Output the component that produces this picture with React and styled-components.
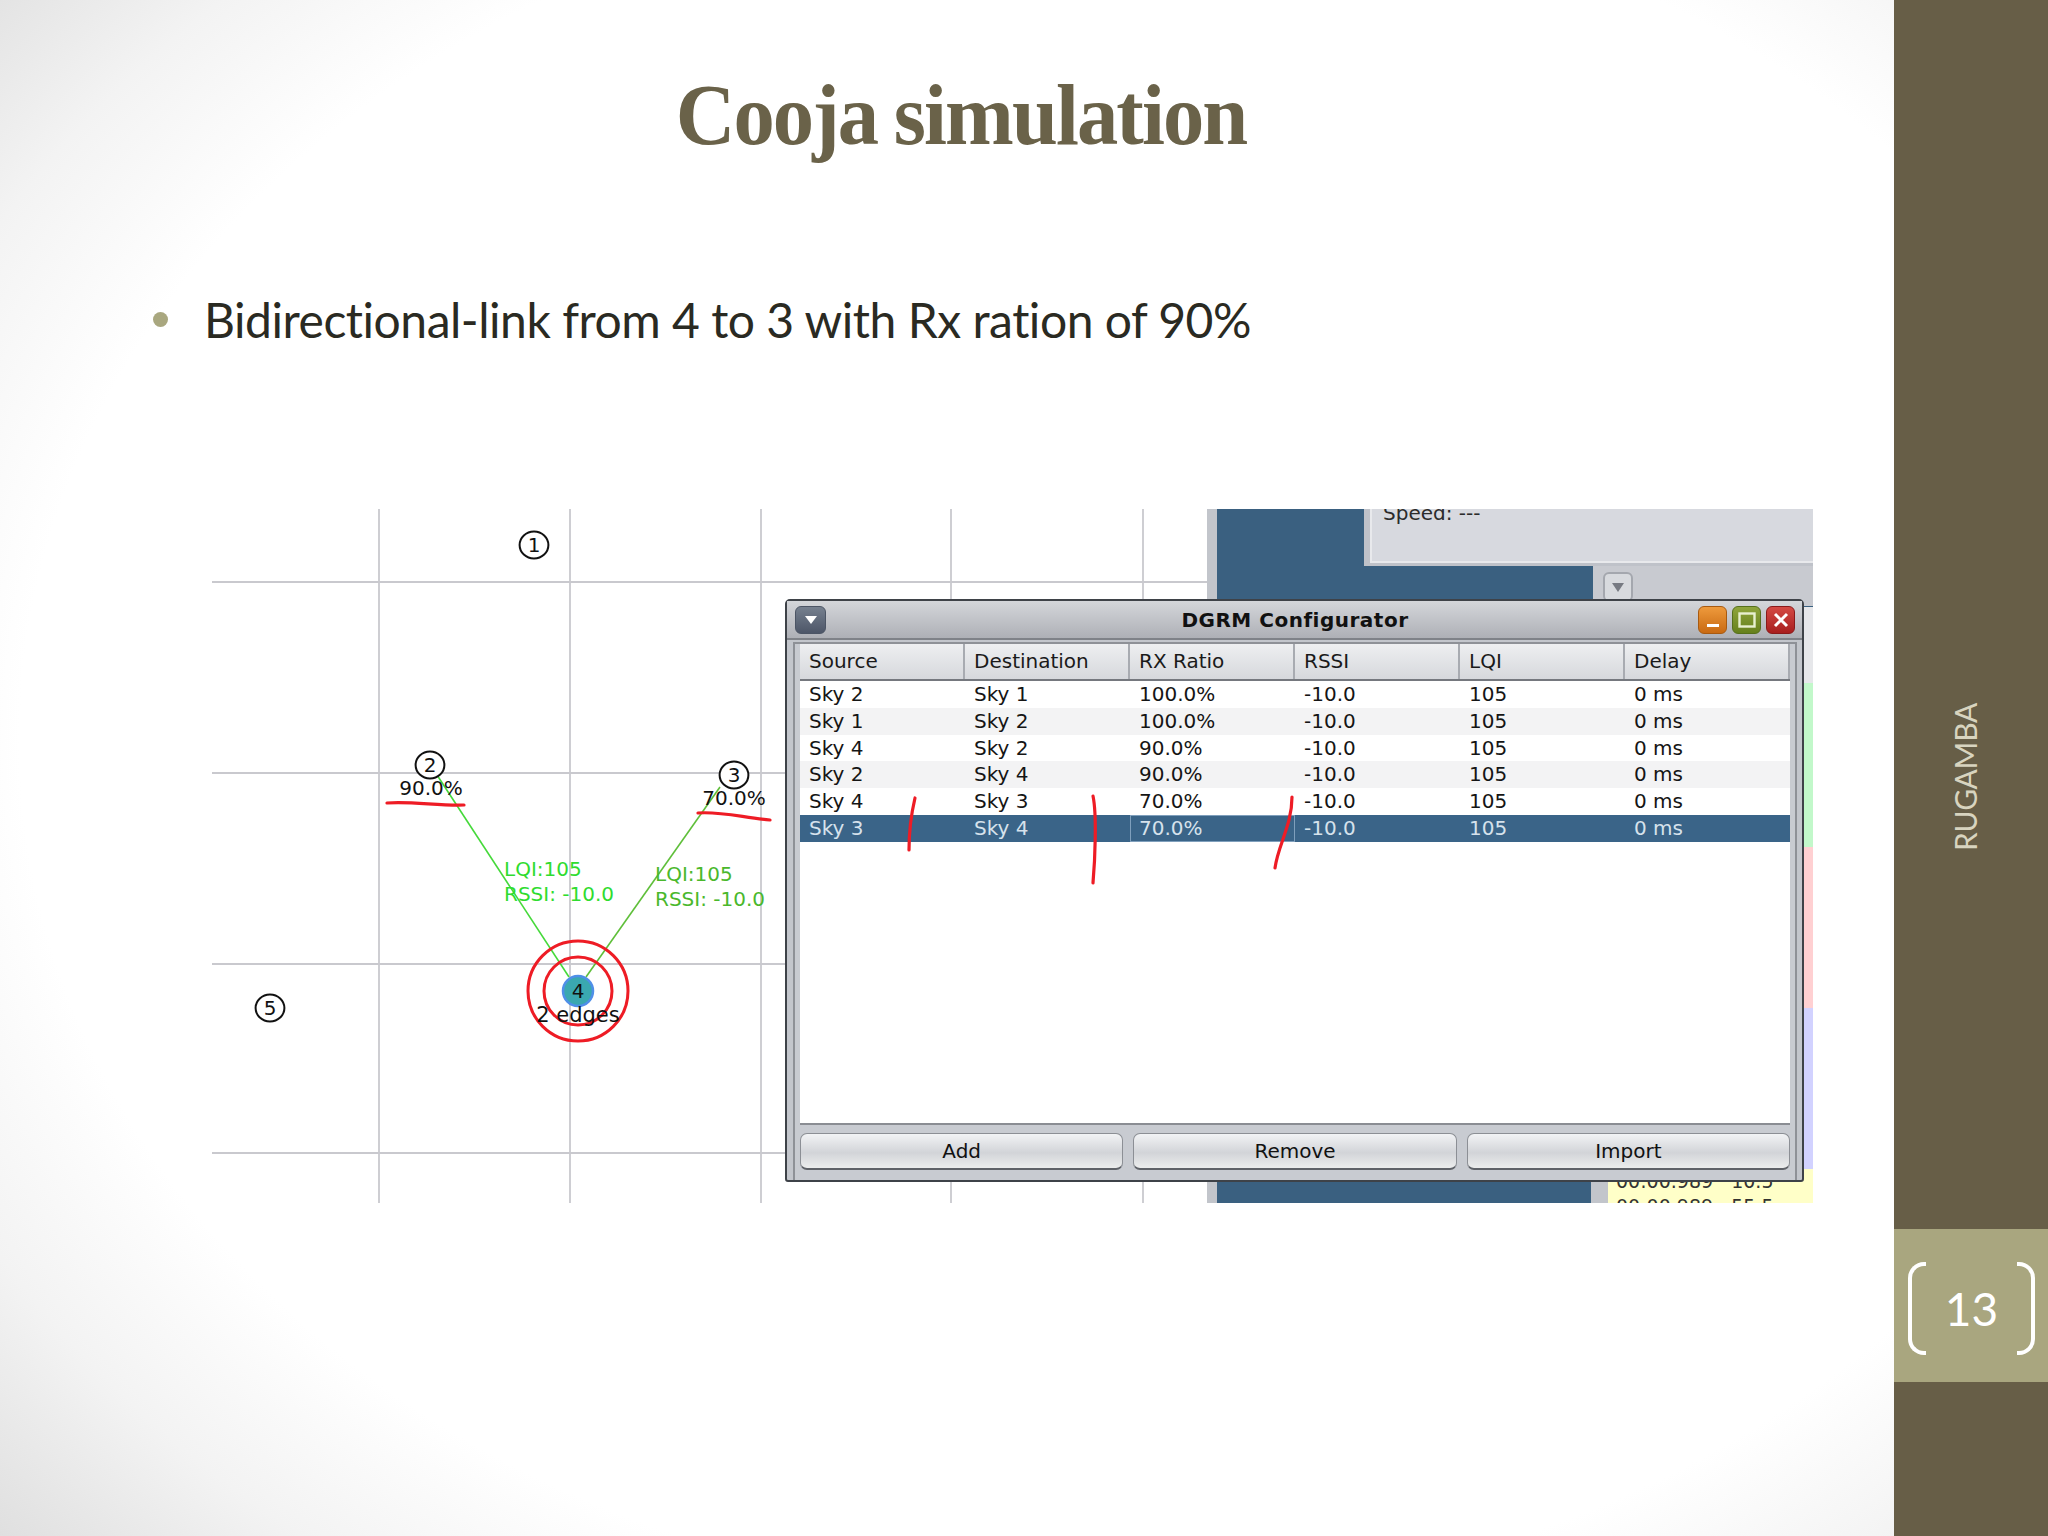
import React from "react";
import styled, { createGlobalStyle } from "styled-components";

const Global = createGlobalStyle`
  html, body { margin: 0; padding: 0; background: #fff; }
  #root { width: 2048px; height: 1536px; overflow: hidden; }
`;

const Slide = styled.div`
  width: 2048px;
  height: 1536px;
  display: flex;
  font-family: "Lato", "Liberation Sans", sans-serif;
`;

const Main = styled.main`
  width: 1894px;
  height: 1536px;
  display: flex;
  flex-direction: column;
  background: radial-gradient(ellipse 1500px 1200px at 1100px 740px, #ffffff 72%, #f3f3f3 85%, #dedede 100%);
`;

const Title = styled.h1`
  margin: 72px 0 0;
  height: 86px;
  line-height: 86px;
  text-align: center;
  font-family: "Liberation Serif", serif;
  font-size: 86px;
  font-weight: 700;
  letter-spacing: -2px;
  word-spacing: -2px;
  color: #6a6249;
  transform: translateX(14px) scaleX(0.96);
`;

const BulletRow = styled.div`
  margin: 131px 0 0 153px;
  height: 60px;
  display: flex;
  align-items: center;
  gap: 36px;
`;

const Dot = styled.span`
  width: 15px;
  height: 15px;
  border-radius: 50%;
  background: #a9a77f;
`;

const BulletText = styled.p`
  margin: 0;
  font-size: 48px;
  letter-spacing: -0.48px;
  color: #2a2a22;
  white-space: nowrap;
`;

const Figure = styled.figure`
  position: relative;
  margin: 160px 0 0 212px;
  width: 1601px;
  height: 694px;
  background: #fff;
  overflow: hidden;
  font-family: "DejaVu Sans", sans-serif;
`;

const Canvas = styled.svg`
  position: absolute;
  inset: 0;
  width: 1601px;
  height: 694px;
`;

const Desktop = styled.div`
  position: absolute;
  left: 995px;
  top: 0;
  width: 606px;
  height: 694px;
  background: #3a6080;
  border-left: 10px solid #c2c5cb;
  box-sizing: border-box;
`;

const InfoPanel = styled.div`
  position: absolute;
  left: 147px;
  top: 0;
  width: 449px;
  height: 57px;
  box-sizing: border-box;
  background: #d7d9df;
  border: solid #bfc2c9;
  border-width: 0 0 3px 6px;
  box-shadow: inset 2px -2px 0 #e8e9ec;
`;

const SpeedText = styled.span`
  position: absolute;
  left: 13px;
  top: -8px;
  font-size: 20px;
  color: #2b2b2b;
`;

const SideStrip = styled.div`
  position: absolute;
  left: 376px;
  top: 57px;
  width: 220px;
  height: 40px;
  background: #c8cad0;
`;

const StripButton = styled.div`
  position: absolute;
  left: 10px;
  top: 6px;
  width: 30px;
  height: 30px;
  box-sizing: border-box;
  border: 2px solid #a4a7ae;
  border-radius: 6px;
  background: #d8dade;
  display: flex;
  align-items: center;
  justify-content: center;
`;

const ColorColumn = styled.div`
  position: absolute;
  left: 1592px;
  top: 98px;
  width: 9px;
  height: 596px;
  display: flex;
  flex-direction: column;
`;

const Band = styled.div`
  height: ${(p) => p.$h}px;
  background: ${(p) => p.$c};
`;

const LogPanel = styled.div`
  position: absolute;
  left: 1379px;
  top: 660px;
  width: 222px;
  height: 34px;
  box-sizing: border-box;
  background: #ffffc8;
  border-left: 17px solid #c2c5cb;
  overflow: hidden;
`;

const LogLine = styled.div`
  position: absolute;
  left: 8px;
  top: ${(p) => p.$top}px;
  font-size: 19px;
  color: #333;
  white-space: pre;
`;

const Window = styled.section`
  position: absolute;
  left: 573px;
  top: 90px;
  width: 1019px;
  height: 583px;
  box-sizing: border-box;
  border: 2px solid #3e4248;
  border-radius: 5px 5px 3px 3px;
  background: #c3c6cc;
  display: flex;
  flex-direction: column;
`;

const TitleBar = styled.header`
  height: 37px;
  flex: none;
  display: grid;
  grid-template-columns: 1fr auto 1fr;
  align-items: center;
  padding: 0 7px 0 8px;
  background: linear-gradient(#d4d6da, #aeb0b6);
  border-bottom: 2px solid #7f8288;
`;

const WindowControls = styled.div`
  display: flex;
  justify-content: flex-end;
  gap: 5px;
`;

const MenuButton = styled.span`
  width: 31px;
  height: 28px;
  border-radius: 6px;
  border: 1px solid #4c5565;
  background: linear-gradient(#76808f, #4d5668);
  display: flex;
  align-items: center;
  justify-content: center;
  box-sizing: border-box;
`;

const WindowTitle = styled.h2`
  margin: 0;
  text-align: center;
  font-size: 20px;
  font-weight: 700;
  letter-spacing: 0.5px;
  color: #111;
`;

const WinButton = styled.span`
  width: 29px;
  height: 28px;
  box-sizing: border-box;
  border-radius: 6px;
  border: 1px solid ${(p) => p.$edge};
  background: linear-gradient(${(p) => p.$from}, ${(p) => p.$to});
  display: flex;
  align-items: center;
  justify-content: center;
`;

const Body = styled.div`
  flex: 1;
  margin: 2px 5px 0 6px;
  padding: 0 5px;
  border: solid #8e9197;
  border-width: 2px 2px 0;
  background: #c8cbd1;
  display: flex;
  flex-direction: column;
  min-height: 0;
`;

const Table = styled.div`
  height: 479px;
  flex: none;
  background: #fff;
  border-bottom: 2px solid #8a8d93;
  display: flex;
  flex-direction: column;
`;

const HeaderRow = styled.div`
  height: 35px;
  flex: none;
  display: grid;
  grid-template-columns: repeat(6, 1fr);
  background: linear-gradient(#eeeff1, #d6d8dc);
  border-bottom: 2px solid #75787e;
`;

const HeaderCell = styled.div`
  padding-left: 9px;
  line-height: 35px;
  font-size: 20px;
  color: #1a1a1a;
  border-right: 2px solid #a8abb1;
`;

const Row = styled.div`
  height: 26.75px;
  flex: none;
  display: grid;
  grid-template-columns: repeat(6, 1fr);
  background: ${(p) => (p.$selected ? "#3a6488" : p.$alt ? "#f3f3f4" : "#fff")};
  color: ${(p) => (p.$selected ? "#d6e2ec" : "#151515")};
`;

const Cell = styled.div`
  padding-left: 9px;
  line-height: 27px;
  font-size: 20px;
  box-sizing: border-box;
  ${(p) => (p.$focus ? "padding-left: 8px; line-height: 25px; border: 1px solid #7f9fbc;" : "")}
`;

const ButtonBar = styled.div`
  display: grid;
  grid-template-columns: repeat(3, 1fr);
  gap: 10px;
  padding-top: 8px;
`;

const Action = styled.button`
  height: 37px;
  padding: 0;
  border: 1px solid #8c8f95;
  border-bottom: 2px solid #5f6268;
  border-radius: 7px;
  background: linear-gradient(#f2f3f5, #d2d4d8 55%, #eceded);
  font-family: "DejaVu Sans", sans-serif;
  font-size: 20px;
  color: #111;
`;

const Overlay = styled.svg`
  position: absolute;
  inset: 0;
  width: 1601px;
  height: 694px;
  pointer-events: none;
`;

const Sidebar = styled.aside`
  width: 154px;
  height: 1536px;
  background: #675e47;
  display: flex;
  flex-direction: column;
`;

const AuthorArea = styled.div`
  height: 1229px;
  box-sizing: border-box;
  padding: 705px 0 0 0;
  display: flex;
  justify-content: center;
`;

const Author = styled.span`
  writing-mode: vertical-rl;
  transform: rotate(180deg);
  height: 146px;
  font-size: 30px;
  line-height: 32px;
  letter-spacing: -0.3px;
  color: #d8d4bf;
  text-align: left;
  margin-left: -13px;
`;

const NumberBlock = styled.div`
  height: 153px;
  box-sizing: border-box;
  background: #a9a67f;
  display: flex;
  align-items: center;
  justify-content: space-between;
  padding: 5px 13px 0 14px;
`;

const Bracket = styled.span`
  width: 18px;
  height: 93px;
  box-sizing: border-box;
  border: 4px solid #fff;
  ${(p) =>
    p.$right
      ? "border-left: 0; border-radius: 0 16px 16px 0;"
      : "border-right: 0; border-radius: 16px 0 0 16px;"}
`;

const PageNumber = styled.span`
  font-size: 46px;
  color: #fff;
`;

const rows = [
  ["Sky 2", "Sky 1", "100.0%"],
  ["Sky 1", "Sky 2", "100.0%"],
  ["Sky 4", "Sky 2", "90.0%"],
  ["Sky 2", "Sky 4", "90.0%"],
  ["Sky 4", "Sky 3", "70.0%"],
  ["Sky 3", "Sky 4", "70.0%"],
];

const columns = ["Source", "Destination", "RX Ratio", "RSSI", "LQI", "Delay"];

const ox = 212;
const oy = 509;
const GX = [379, 570, 761, 951, 1143];
const GY = [582, 773, 964, 1153];

const Node = ({ x, y, n }) => (
  <g>
    <ellipse cx={x - ox} cy={y - oy} rx="14.4" ry="13.5" fill="#fff" stroke="#111" strokeWidth="2" />
    <text x={x - ox} y={y - oy + 7} textAnchor="middle" fontSize="20" fill="#111">{n}</text>
  </g>
);

const App = () => (
  <>
    <Global />
    <Slide>
      <Main>
        <Title>Cooja simulation</Title>
        <BulletRow>
          <Dot />
          <BulletText>Bidirectional-link from 4 to 3 with Rx ration of 90%</BulletText>
        </BulletRow>
        <Figure>
          <Canvas viewBox="0 0 1601 694">
            {GX.map((x) => (
              <line key={x} x1={x - ox} x2={x - ox} y1="0" y2="694" stroke="#c9c9ce" strokeWidth="1.8" />
            ))}
            {GY.map((y) => (
              <line key={y} x1="0" x2="1601" y1={y - oy} y2={y - oy} stroke="#c9c9ce" strokeWidth="1.8" />
            ))}
            <line x1={437 - ox} y1={775 - oy} x2={569 - ox} y2={977 - oy} stroke="#45d93a" strokeWidth="1.6" />
            <line x1={720 - ox} y1={787 - oy} x2={586 - ox} y2={977 - oy} stroke="#5fbf3a" strokeWidth="1.6" />
            <Node x={534} y={545} n="1" />
            <Node x={430} y={765} n="2" />
            <Node x={734} y={775} n="3" />
            <Node x={270} y={1008} n="5" />
            <g fontSize="20">
              <text x={431 - ox} y={795 - oy} textAnchor="middle" fill="#111">90.0%</text>
              <text x={734 - ox} y={805 - oy} textAnchor="middle" fill="#111">70.0%</text>
              <text x={504 - ox} y={876 - oy} fill="#2fdc2f">LQI:105</text>
              <text x={504 - ox} y={901 - oy} fill="#2fdc2f">RSSI: -10.0</text>
              <text x={655 - ox} y={881 - oy} fill="#4ab82c">LQI:105</text>
              <text x={655 - ox} y={906 - oy} fill="#4ab82c">RSSI: -10.0</text>
            </g>
            <circle cx={578 - ox} cy={991 - oy} r="15" fill="#3aa8b0" stroke="#4f8fe8" strokeWidth="2.5" />
            <text x={578 - ox} y={998 - oy} textAnchor="middle" fontSize="20" fill="#111">4</text>
            <circle cx={578 - ox} cy={991 - oy} r="34" fill="none" stroke="#ee1c25" strokeWidth="3" />
            <circle cx={578 - ox} cy={991 - oy} r="50" fill="none" stroke="#ee1c25" strokeWidth="3" />
            <text x={578 - ox} y={1022 - oy} textAnchor="middle" fontSize="21" fill="#111">2 edges</text>
          </Canvas>
          <Desktop>
            <InfoPanel>
              <SpeedText>Speed: ---</SpeedText>
            </InfoPanel>
            <SideStrip>
              <StripButton>
                <svg width="14" height="11" viewBox="0 0 14 11"><path d="M1 1h12L7 10z" fill="#777a82" /></svg>
              </StripButton>
            </SideStrip>
          </Desktop>
          <ColorColumn>
            <Band $h={76} $c="#e6e7ea" />
            <Band $h={164} $c="#c2f8ca" />
            <Band $h={161} $c="#ffd0d2" />
            <Band $h={161} $c="#d2d2ff" />
            <Band $h={34} $c="#ffffc8" />
          </ColorColumn>
          <LogPanel>
            <LogLine $top={1}>00:00.989   10.5</LogLine>
            <LogLine $top={26}>00:00.989   55.5</LogLine>
          </LogPanel>
          <Window>
            <TitleBar>
              <MenuButton>
                <svg width="14" height="10" viewBox="0 0 14 10"><path d="M1 1h12L7 9z" fill="#fff" /></svg>
              </MenuButton>
              <WindowTitle>DGRM Configurator</WindowTitle>
              <WindowControls>
                <WinButton $edge="#a85a10" $from="#ee9a3c" $to="#c96a12">
                  <svg width="16" height="16" viewBox="0 0 16 16"><rect x="2" y="12" width="12" height="3" fill="#fff" /></svg>
                </WinButton>
                <WinButton $edge="#56701c" $from="#8fa53c" $to="#66801c">
                  <svg width="18" height="16" viewBox="0 0 18 16"><rect x="1.5" y="1.5" width="15" height="13" fill="none" stroke="#e8f0d0" strokeWidth="2.4" /></svg>
                </WinButton>
                <WinButton $edge="#8a1a1a" $from="#d44a44" $to="#a81e1e">
                  <svg width="16" height="16" viewBox="0 0 16 16"><path d="M2 2l12 12M14 2L2 14" stroke="#fff" strokeWidth="3" /></svg>
                </WinButton>
              </WindowControls>
            </TitleBar>
            <Body>
              <Table>
                <HeaderRow>
                  {columns.map((c) => (
                    <HeaderCell key={c}>{c}</HeaderCell>
                  ))}
                </HeaderRow>
                {rows.map((r, i) => (
                  <Row key={i} $alt={i % 2 === 1} $selected={i === 5}>
                    <Cell>{r[0]}</Cell>
                    <Cell>{r[1]}</Cell>
                    <Cell $focus={i === 5}>{r[2]}</Cell>
                    <Cell>-10.0</Cell>
                    <Cell>105</Cell>
                    <Cell>0 ms</Cell>
                  </Row>
                ))}
              </Table>
              <ButtonBar>
                <Action>Add</Action>
                <Action>Remove</Action>
                <Action>Import</Action>
              </ButtonBar>
            </Body>
          </Window>
          <Overlay viewBox="0 0 1601 694">
            <g fill="none" stroke="#ee1c25" strokeWidth="3.2" strokeLinecap="round">
              <path d={`M${387 - ox} ${803 - oy}C${410 - ox} ${801 - oy} ${440 - ox} ${806 - oy} ${464 - ox} ${805 - oy}`} />
              <path d={`M${698 - ox} ${813 - oy}C${720 - ox} ${811 - oy} ${745 - ox} ${818 - oy} ${770 - ox} ${820 - oy}`} />
              <path d={`M${915 - ox} ${798 - oy}C${911 - ox} ${815 - oy} ${909 - ox} ${835 - oy} ${909 - ox} ${850 - oy}`} />
              <path d={`M${1093 - ox} ${796 - oy}C${1097 - ox} ${815 - oy} ${1095 - ox} ${860 - oy} ${1093 - ox} ${883 - oy}`} />
              <path d={`M${1292 - ox} ${797 - oy}C${1292 - ox} ${825 - oy} ${1278 - ox} ${845 - oy} ${1275 - ox} ${868 - oy}`} />
            </g>
          </Overlay>
        </Figure>
      </Main>
      <Sidebar>
        <AuthorArea>
          <Author>RUGAMBA</Author>
        </AuthorArea>
        <NumberBlock>
          <Bracket />
          <PageNumber>13</PageNumber>
          <Bracket $right />
        </NumberBlock>
      </Sidebar>
    </Slide>
  </>
);

export default App;
